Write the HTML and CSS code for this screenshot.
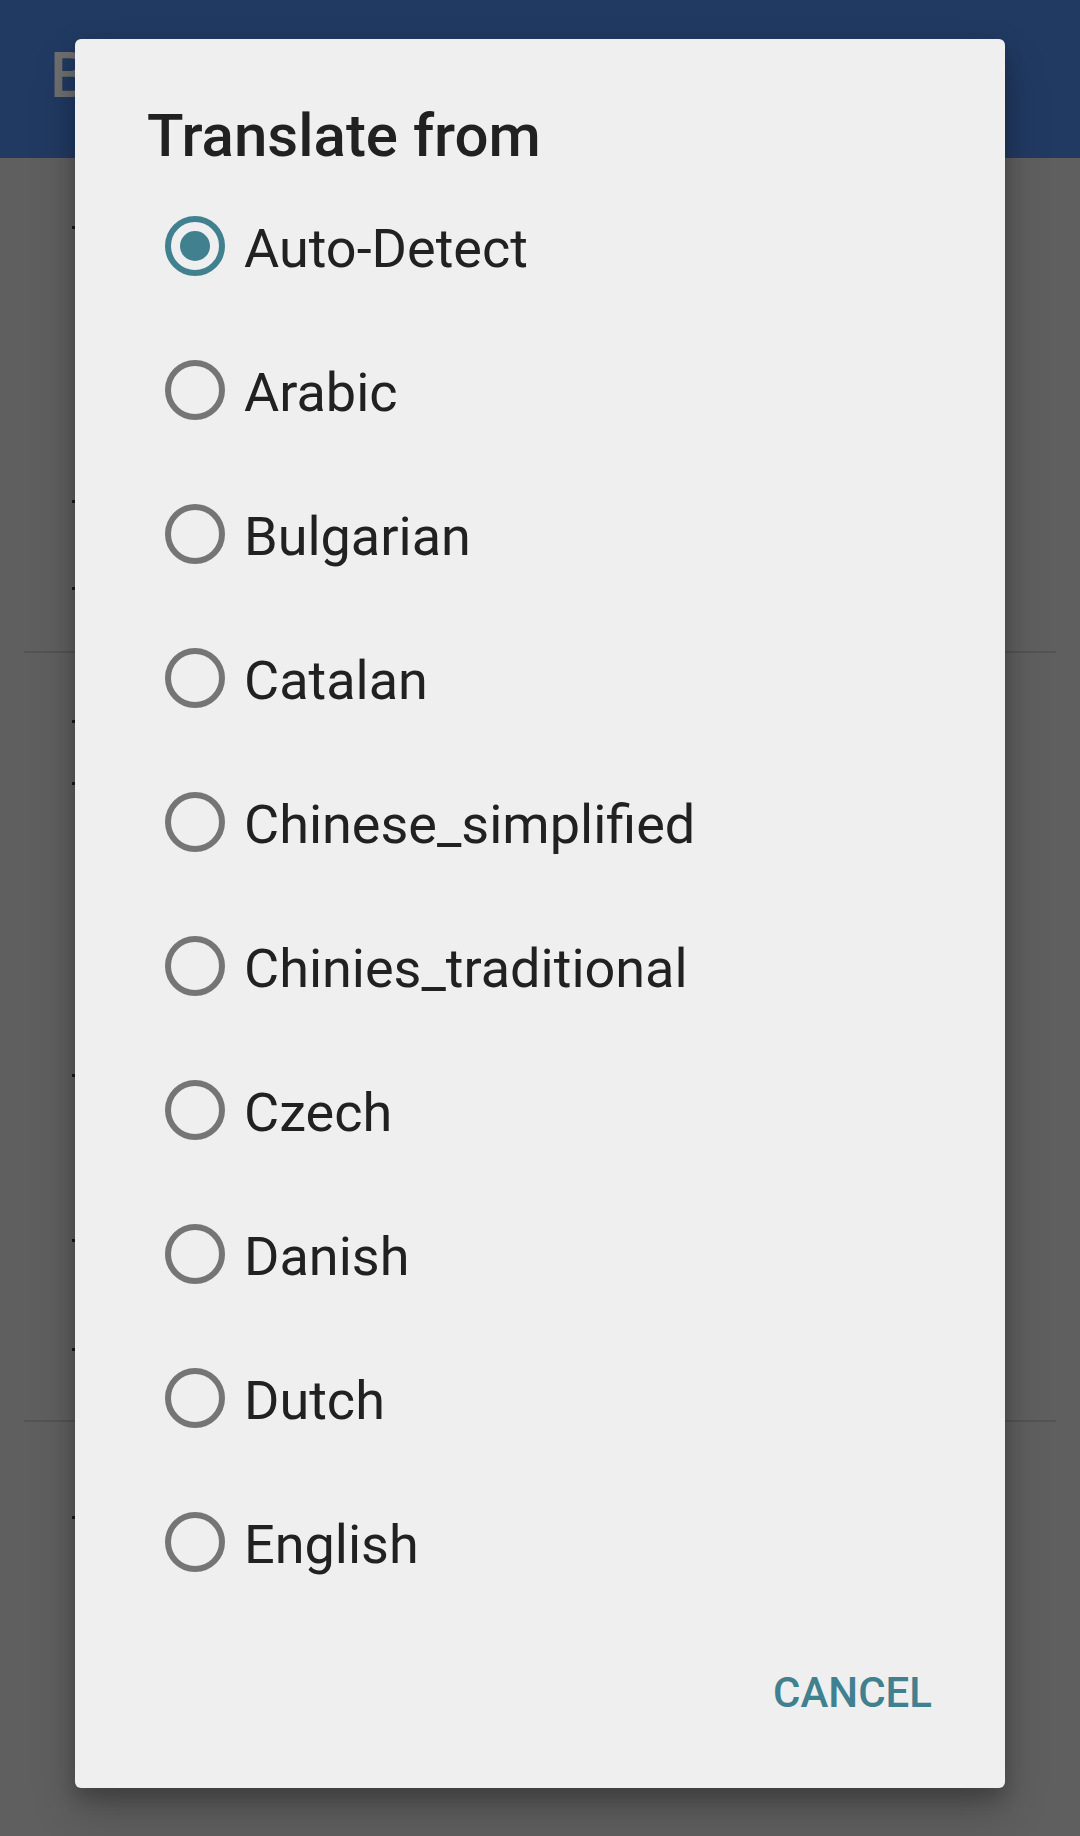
FILE: index.html
```html
<!DOCTYPE html>
<html lang="en">
<head>
<meta charset="utf-8">
<title>Translate from</title>
<link rel="stylesheet" href="styles.css">
</head>
<body>
<div class="page">
  <header class="appbar"><span class="appbar-title">B</span></header>
  <main class="content">
    <section class="section section-first">
      <span class="mark m1"></span>
      <span class="mark m2"></span>
      <span class="mark m3"></span>
    </section>
    <section class="section section-second">
      <span class="mark m4"></span>
      <span class="mark m5"></span>
      <span class="mark m6"></span>
      <span class="mark m7"></span>
      <span class="mark m8"></span>
    </section>
    <section class="section section-third">
      <span class="mark m9"></span>
    </section>
  </main>

  <div class="scrim">
    <div class="dialog" role="dialog" aria-labelledby="dlg-title">
      <h1 class="dialog-title" id="dlg-title">Translate from</h1>
      <ul class="options">
        <li class="option checked"><span class="radio"></span><span class="label">Auto-Detect</span></li>
        <li class="option"><span class="radio"></span><span class="label">Arabic</span></li>
        <li class="option"><span class="radio"></span><span class="label">Bulgarian</span></li>
        <li class="option"><span class="radio"></span><span class="label">Catalan</span></li>
        <li class="option"><span class="radio"></span><span class="label">Chinese_simplified</span></li>
        <li class="option"><span class="radio"></span><span class="label">Chinies_traditional</span></li>
        <li class="option"><span class="radio"></span><span class="label">Czech</span></li>
        <li class="option"><span class="radio"></span><span class="label">Danish</span></li>
        <li class="option"><span class="radio"></span><span class="label">Dutch</span></li>
        <li class="option"><span class="radio"></span><span class="label">English</span></li>
      </ul>
      <div class="actions">
        <button class="btn-text" type="button">CANCEL</button>
      </div>
    </div>
  </div>
</div>
</body>
</html>
```

FILE: styles.css
```css
* { box-sizing: border-box; }

html, body {
  margin: 0;
  padding: 0;
  width: 1080px;
  height: 1836px;
  overflow: hidden;
  background: #5f5f5f;
  font-family: Roboto, "Noto Sans", "Liberation Sans", sans-serif;
}

.page {
  position: relative;
  width: 1080px;
  height: 1836px;
  background: #5f5f5f;
}

/* ---------- app behind the dialog (already dimmed) ---------- */
.appbar {
  height: 158px;
  background: #213a62;
  display: flex;
  align-items: center;
  padding-left: 50px;
  padding-bottom: 6px;
}
.appbar-title {
  color: #6f6f6f;
  font-size: 63px;
  line-height: 76px;
  font-weight: 500;
  white-space: nowrap;
}

.content {
  display: flex;
  flex-direction: column;
}
.section {
  margin: 0 24px;
  padding-left: 48px;
  border-bottom: 2px solid #535353;
  display: flex;
  flex-direction: column;
  align-items: flex-start;
}
.section-first { height: 495px; }
.section-second { height: 769px; }
.section-third { border-bottom: none; }

/* edges of the list texts peeking out from behind the dialog */
.mark {
  width: 3px;
  height: 3px;
  background: #1a1a1a;
}
.m1 { margin-top: 68px; }
.m2 { margin-top: 271px; }
.m3 { margin-top: 84px; }
.m4 { margin-top: 67px; }
.m5 { margin-top: 59px; }
.m6 { margin-top: 289px; }
.m7 { margin-top: 162px; }
.m8 { margin-top: 106px; }
.m9 { margin-top: 94px; }

/* ---------- dialog ---------- */
.scrim {
  position: absolute;
  inset: 0;
}

.dialog {
  position: absolute;
  left: 75px;
  top: 39px;
  width: 930px;
  height: 1749px;
  background: #efefef;
  border-radius: 6px;
  box-shadow: 0 22px 44px rgba(0, 0, 0, 0.22), 0 10px 18px rgba(0, 0, 0, 0.18);
  padding-top: 59px;
  display: flex;
  flex-direction: column;
}

.dialog-title {
  margin: 0;
  padding-left: 72px;
  font-size: 60px;
  line-height: 76px;
  font-weight: 500;
  color: #212121;
}

.options {
  list-style: none;
  margin: 0;
  padding: 0;
}

.option {
  height: 144px;
  display: flex;
  align-items: center;
  padding-left: 90px;
}

.radio {
  flex: none;
  width: 60px;
  height: 60px;
  border-radius: 50%;
  border: 6px solid #757575;
  display: flex;
  align-items: center;
  justify-content: center;
}
.option.checked .radio {
  border-color: #40808f;
}
.option.checked .radio::after {
  content: "";
  width: 30px;
  height: 30px;
  border-radius: 50%;
  background: #40808f;
}

.label {
  margin-left: 19px;
  padding-top: 5px;
  font-size: 54px;
  color: #212121;
  white-space: nowrap;
}

.actions {
  margin-top: 25px;
  display: flex;
  justify-content: flex-end;
  padding-right: 49px;
}

.btn-text {
  background: none;
  border: none;
  padding: 0 24px;
  height: 108px;
  line-height: 108px;
  font-family: Roboto, "Noto Sans", "Liberation Sans", sans-serif;
  font-size: 42px;
  font-weight: 500;
  color: #40808f;
  letter-spacing: 0;
}
```
